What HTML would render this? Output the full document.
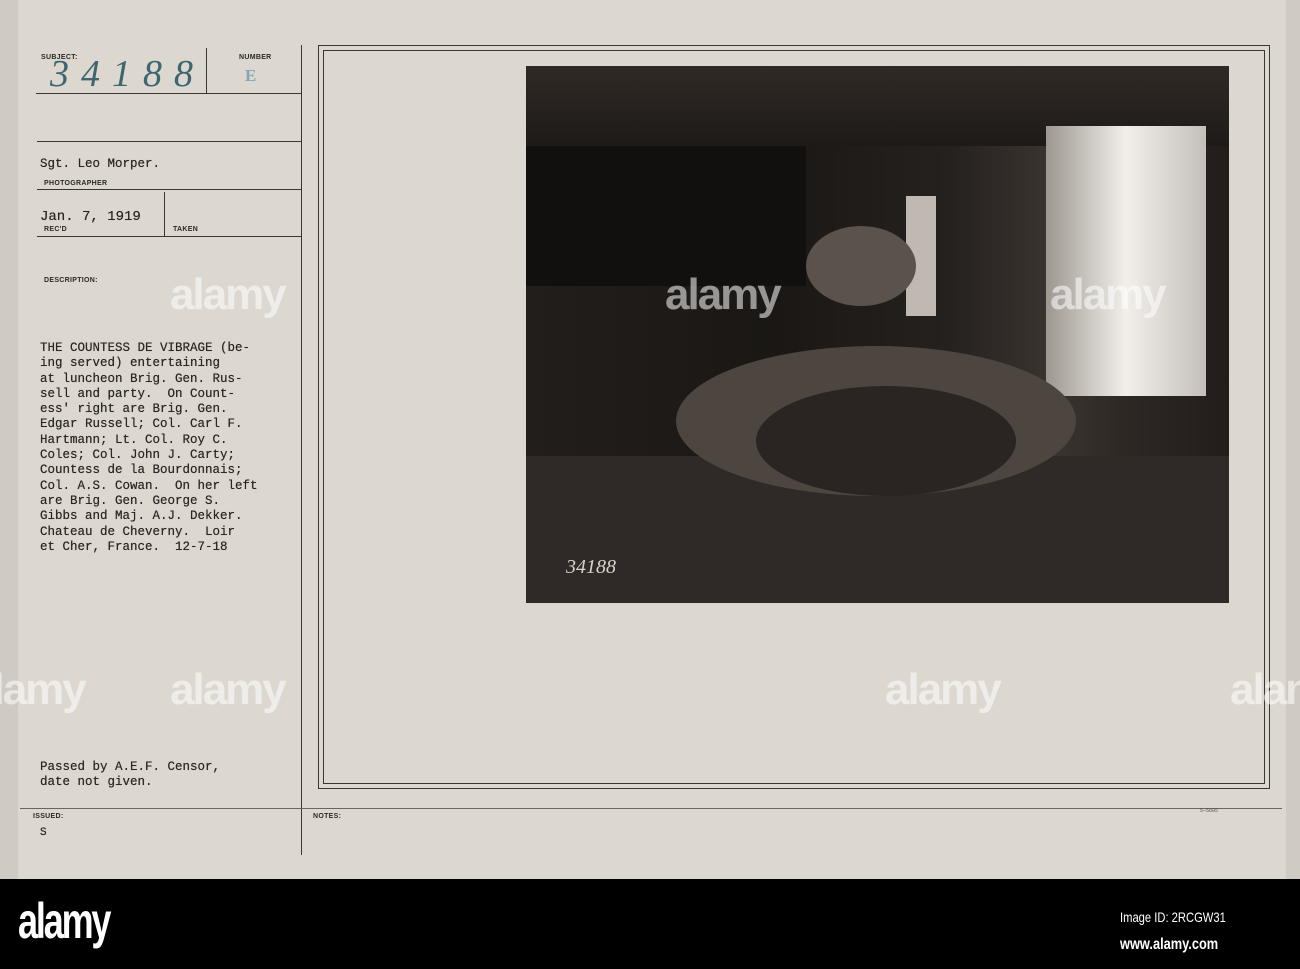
<!DOCTYPE html>
<html><head><style>
body{margin:0;width:1300px;height:969px;background:#cfcac3;position:relative;overflow:hidden;font-family:"Liberation Mono",monospace}
.card{position:absolute;left:18px;top:0;width:1268px;height:879px;background:#dcd7cf}
.a{position:absolute}
.l{position:absolute;background:#3a3733}
.lab{position:absolute;font-family:"Liberation Sans",sans-serif;font-weight:bold;font-size:7px;color:#2b2926;letter-spacing:.3px}
.t{position:absolute;font-size:12.5px;color:#2a2623;white-space:pre;line-height:15.3px;text-shadow:0 0 .4px #2a2623}
.bar{position:absolute;left:0;top:879px;width:1300px;height:90px;background:#000}
.wm{position:absolute;font-family:"Liberation Sans",sans-serif;font-weight:bold;font-size:44px;color:rgba(255,255,255,.55);letter-spacing:-2px}
</style></head><body>
<div class="card"></div>
<div class="l" style="left:36px;top:93px;width:266px;height:1px"></div>
<div class="l" style="left:206px;top:48px;width:1px;height:45px"></div>
<div class="l" style="left:37px;top:141px;width:264px;height:1px"></div>
<div class="l" style="left:37px;top:189px;width:264px;height:1px"></div>
<div class="l" style="left:37px;top:236px;width:264px;height:1px"></div>
<div class="l" style="left:164px;top:192px;width:1px;height:44px"></div>
<div class="l" style="left:301px;top:45px;width:1px;height:810px"></div>
<div class="l" style="left:20px;top:808px;width:1262px;height:1px;background:#6a655f"></div>
<div class="a" style="left:318px;top:45px;width:950px;height:742px;border:1px solid #3a3733"></div>
<div class="a" style="left:323px;top:50px;width:940px;height:732px;border:1px solid #3a3733"></div>
<div class="lab" style="left:41px;top:54px">SUBJECT:</div>
<div class="a" style="left:50px;top:52px;font-family:'Liberation Serif',serif;font-style:italic;font-size:38px;color:#3e6670;letter-spacing:12px">34188</div>
<div class="lab" style="left:239px;top:54px">NUMBER</div>
<div class="a" style="left:245px;top:66px;font-family:'Liberation Serif',serif;font-weight:bold;font-size:17px;color:#7fa6bd">E</div>
<div class="t" style="left:40px;top:157px">Sgt. Leo Morper.</div>
<div class="lab" style="left:44px;top:180px">PHOTOGRAPHER</div>
<div class="t" style="left:40px;top:210px;font-size:14px">Jan. 7, 1919</div>
<div class="lab" style="left:44px;top:226px">REC'D</div>
<div class="lab" style="left:173px;top:226px">TAKEN</div>
<div class="lab" style="left:44px;top:277px">DESCRIPTION:</div>
<div class="t" style="left:40px;top:341px">THE COUNTESS DE VIBRAGE (be-
ing served) entertaining
at luncheon Brig. Gen. Rus-
sell and party.  On Count-
ess' right are Brig. Gen.
Edgar Russell; Col. Carl F.
Hartmann; Lt. Col. Roy C.
Coles; Col. John J. Carty;
Countess de la Bourdonnais;
Col. A.S. Cowan.  On her left
are Brig. Gen. George S.
Gibbs and Maj. A.J. Dekker.
Chateau de Cheverny.  Loir
et Cher, France.  12-7-18</div>
<div class="t" style="left:40px;top:760px">Passed by A.E.F. Censor,
date not given.</div>
<div class="lab" style="left:33px;top:813px">ISSUED:</div>
<div class="t" style="left:40px;top:826px;font-size:11px">S</div>
<div class="lab" style="left:313px;top:813px">NOTES:</div>
<div class="a" style="left:1200px;top:808px;font-size:5px;color:#555">5—5605</div>
<div class="a" style="left:526px;top:66px;width:703px;height:537px;background:linear-gradient(90deg,#221e1b 0%,#1a1715 35%,#25211e 60%,#3a3430 75%,#2e2825 85%,#221d1a 100%);overflow:hidden">
 <div class="a" style="left:0;top:0;width:703px;height:80px;background:linear-gradient(#302a26,#1e1a17)"></div>
 <div class="a" style="left:0;top:80px;width:280px;height:140px;background:#12100e"></div>
 <div class="a" style="left:520px;top:60px;width:160px;height:270px;background:linear-gradient(90deg,#9d9790,#f2efea 50%,#c4bfb9)"></div>
 <div class="a" style="left:380px;top:130px;width:30px;height:120px;background:#bfb9b2"></div>
 <div class="a" style="left:280px;top:160px;width:110px;height:80px;border-radius:50%;background:#5a524b"></div>
 <div class="a" style="left:0;top:390px;width:703px;height:147px;background:#2f2a27"></div>
 <div class="a" style="left:150px;top:280px;width:400px;height:150px;border-radius:50%;background:#4d4640"></div>
 <div class="a" style="left:230px;top:320px;width:260px;height:110px;border-radius:50%;background:#2a2522"></div>
 <div class="a" style="left:40px;top:490px;font-family:'Liberation Serif',serif;font-style:italic;font-size:20px;color:#d8d2ca">34188</div>
</div>
<div class="wm" style="left:170px;top:270px">alamy</div>
<div class="wm" style="left:170px;top:665px">alamy</div>
<div class="wm" style="left:665px;top:270px">alamy</div>
<div class="wm" style="left:885px;top:665px">alamy</div>
<div class="wm" style="left:1050px;top:270px">alamy</div>
<div class="wm" style="left:1230px;top:665px">alamy</div>
<div class="wm" style="left:-30px;top:665px">alamy</div>
<div class="bar">
 <div class="a" style="left:18px;top:13px;font-family:'Liberation Sans',sans-serif;font-weight:bold;font-size:50px;color:#fff;letter-spacing:-3px;transform:scaleX(.72);transform-origin:left">alamy</div>
 <div class="a" style="left:1120px;top:30px;font-family:'Liberation Sans',sans-serif;font-size:14px;color:#fff;transform:scaleX(.8);transform-origin:left">Image ID: 2RCGW31</div>
 <div class="a" style="left:1120px;top:57px;font-family:'Liberation Sans',sans-serif;font-weight:bold;font-size:16px;color:#fff;transform:scaleX(.8);transform-origin:left">www.alamy.com</div>
</div>
</body></html>
